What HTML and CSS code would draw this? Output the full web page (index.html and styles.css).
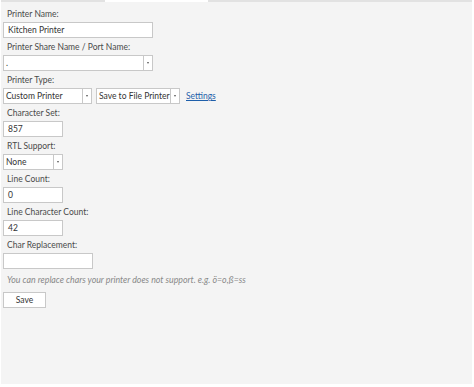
FILE: index.html
```html
<!DOCTYPE html>
<html lang="en">
<head>
    <meta charset="UTF-8">
    <meta name="viewport" content="width=device-width, initial-scale=1.0">
    <title>Printer Settings</title>
    <link rel="stylesheet" href="styles.css">
</head>
<body>
    <div class="panel">
        <div class="tabs">
            <div class="tab"></div>
            <div class="tab active"></div>
            <div class="tab rest"></div>
        </div>

        <div class="form">
            <div class="form-group">
                <label>Printer Name:</label>
                <div class="input wide">Kitchen Printer</div>
            </div>

            <div class="form-group">
                <label>Printer Share Name / Port Name:</label>
                <div class="select wide">
                    <span class="value">.</span>
                    <span class="arrow"></span>
                </div>
            </div>

            <div class="form-group">
                <label>Printer Type:</label>
                <div class="row">
                    <div class="select type">
                        <span class="value">Custom Printer</span>
                        <span class="arrow"></span>
                    </div>
                    <div class="select subtype">
                        <span class="value">Save to File Printer</span>
                        <span class="arrow"></span>
                    </div>
                    <a href="#" class="link">Settings</a>
                </div>
            </div>

            <div class="form-group">
                <label>Character Set:</label>
                <div class="input small">857</div>
            </div>

            <div class="form-group">
                <label>RTL Support:</label>
                <div class="select small">
                    <span class="value">None</span>
                    <span class="arrow"></span>
                </div>
            </div>

            <div class="form-group">
                <label>Line Count:</label>
                <div class="input small">0</div>
            </div>

            <div class="form-group">
                <label>Line Character Count:</label>
                <div class="input small">42</div>
            </div>

            <div class="form-group">
                <label>Char Replacement:</label>
                <div class="input medium"></div>
            </div>

            <p class="hint">You can replace chars your printer does not support. e.g. ö=o,ß=ss</p>

            <button class="btn">Save</button>
        </div>
    </div>
</body>
</html>
```

FILE: styles.css
```css
body {
    margin: 0;
    background: #ffffff;
    font-family: Lato, 'Segoe UI', sans-serif;
    font-size: 8.5px;
    color: #333;
}

.panel {
    margin: 0 2px 0 1px;
    height: 384px;
    background: #f4f4f4;
}

.tabs {
    display: flex;
    height: 2px;
}

.tab {
    width: 104px;
    background: #e2e2e2;
}

.tab.active {
    width: 103px;
    background: #ffffff;
}

.tab.rest {
    flex: 1;
}

.form {
    padding: 5px 0 0 2px;
}

.form-group {
    margin-bottom: 2px;
}

label {
    display: block;
    height: 14px;
    line-height: 14px;
    padding-left: 4px;
    margin-bottom: 1px;
    color: #4a4a4a;
}

.input, .select {
    box-sizing: border-box;
    height: 16px;
    line-height: 14px;
    background: #fff;
    border: 1px solid #c8c8c8;
    padding-left: 4px;
    color: #333;
}

.select {
    display: flex;
    padding-left: 0;
}

.select .value {
    flex: 1;
    padding-left: 2px;
    white-space: nowrap;
}

.select .arrow {
    width: 8px;
    border-left: 1px solid #c8c8c8;
    position: relative;
}

.select .arrow::after {
    content: '';
    position: absolute;
    left: 3px;
    top: 6px;
    border-left: 1px solid transparent;
    border-right: 1px solid transparent;
    border-top: 2px solid #555;
}

.wide { width: 150px; }
.small { width: 60px; }
.medium { width: 90px; }
.type { width: 89px; }
.subtype { width: 84px; }

.row {
    display: flex;
    align-items: center;
    gap: 4px;
}

.link {
    margin-left: 2px;
    color: #1e5faa;
    text-decoration: underline;
}

.hint {
    margin: 4px 0 5px 4px;
    height: 14px;
    line-height: 14px;
    font-size: 8.8px;
    font-style: italic;
    color: #888;
}

.btn {
    display: block;
    width: 43px;
    height: 16px;
    padding: 0;
    background: #fff;
    border: 1px solid #c8c8c8;
    font-family: inherit;
    font-size: 8.5px;
    color: #333;
}
```
